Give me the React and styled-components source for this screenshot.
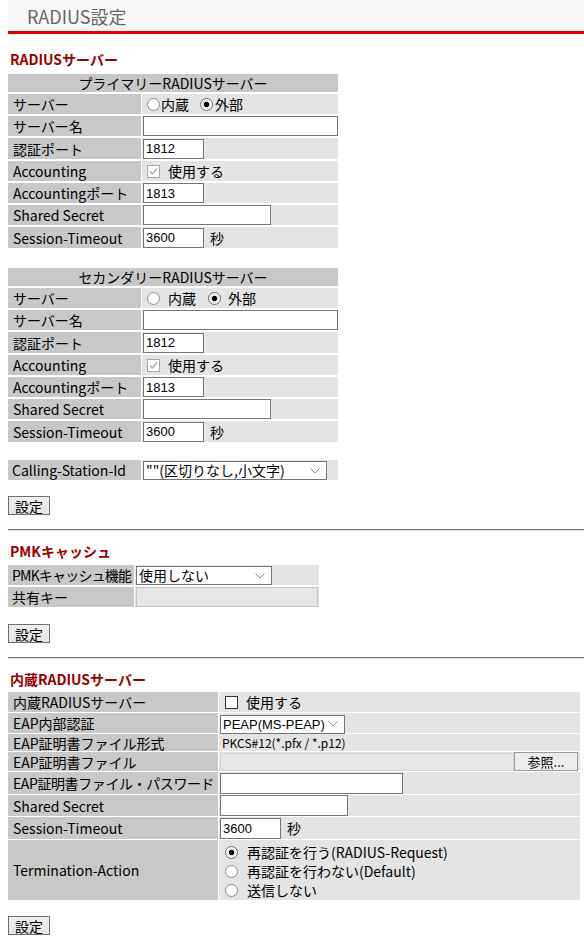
import React from 'react';
import styled, { createGlobalStyle } from 'styled-components';

const Global = createGlobalStyle`
  html, body { padding: 0; background: #fff; }
  body {
    margin: 0 0 0 8px;
    font-family: "Noto Sans CJK JP", "Noto Sans", sans-serif;
    font-size: 14px;
    color: #000;
  }
  * { box-sizing: border-box; }
`;

const PageHeader = styled.header`
  height: 34px;
  background: #f8f8f8;
  border-bottom: 3px solid #e60000;
  padding-left: 19px;
  display: flex;
  align-items: center;
  font-size: 18px;
  color: #666;
  font-weight: normal;
  margin: 0;
`;

const SectionTitle = styled.h2`
  margin: ${p => p.$top}px 0 ${p => p.$bottom}px 2px;
  font-size: 14px;
  line-height: 16px;
  font-weight: bold;
  color: #990000;
`;

const FormGrid = styled.div`
  display: grid;
  grid-template-columns: ${p => p.$label}px ${p => p.$value}px;
  row-gap: ${p => p.$rowGap ?? 2}px;
  column-gap: 1px;
  margin-top: ${p => p.$top || 0}px;
  line-height: 18px;
`;

const HeadCell = styled.div`
  grid-column: 1 / -1;
  background: #c8c8c8;
  text-align: center;
  height: 18px;
  line-height: 18px;
`;

const Label = styled.div`
  background: #c8c8c8;
  padding-left: ${p => p.$pad ?? 5}px;
  display: flex;
  align-items: center;
  height: ${p => p.$h || 20}px;
  white-space: nowrap;
  letter-spacing: ${p => p.$ls || 0}px;
  overflow: hidden;
`;

const Value = styled.div`
  background: #e4e4e4;
  display: flex;
  align-items: center;
  gap: ${p => p.$gap || 0}px;
  padding-left: ${p => p.$pad ?? 1}px;
  padding-right: ${p => p.$padR || 0}px;
  height: ${p => p.$h || 20}px;
  white-space: nowrap;
`;

const TextInput = styled.input`
  width: ${p => p.$w}px;
  height: ${p => p.$h || 20}px;
  border: 1px solid #767676;
  background: ${p => (p.disabled ? '#e6e6e6' : '#fff')};
  border-color: ${p => (p.disabled ? '#c4c4c4' : '#767676')};
  font-family: "Liberation Sans", Arial, sans-serif;
  font-size: 13px;
  padding: 0 2px;
  margin: 0;
  color: #000;
  outline: none;
`;

const Unit = styled.span`
  margin-left: ${p => p.$ml || 6}px;
`;

const Choice = styled.label`
  display: inline-flex;
  align-items: center;
  gap: ${p => p.$gap}px;
  margin-left: ${p => p.$ml || 0}px;
  line-height: 18px;
`;

const RadioDot = styled.span`
  width: 13px;
  height: 13px;
  border-radius: 50%;
  flex: none;
  border: 1px solid ${p => (p.$on ? '#6a6a6a' : '#8c8c8c')};
  background: ${p =>
    p.$on
      ? 'radial-gradient(circle, #000 0 2.4px, #e0e0e0 2.9px 4px, #fff 4.6px)'
      : '#fff'};
`;

const RadioList = styled.div`
  display: flex;
  flex-direction: column;
  gap: 1px;
  padding: 2px 0 0 5px;
`;

const SelectWrap = styled.div`
  position: relative;
  width: ${p => p.$w}px;
  height: 19px;
`;

const Select = styled.select`
  appearance: none;
  width: 100%;
  height: 100%;
  border: 1px solid #767676;
  background: #fff;
  font-family: ${p => (p.$latin ? '"Liberation Sans", Arial, sans-serif' : '"Noto Sans CJK JP", sans-serif')};
  font-size: ${p => (p.$latin ? 13 : 14)}px;
  padding: 0 0 0 2px;
  margin: 0;
  color: #000;
  outline: none;
  line-height: 17px;
`;

const Chevron = styled.svg`
  position: absolute;
  right: 7px;
  top: 7px;
  pointer-events: none;
`;

const Button = styled.button`
  display: block;
  width: ${p => p.$w || 42}px;
  height: 19px;
  margin: ${p => p.$top || 0}px 0 0 ${p => p.$ml || 0}px;
  padding: 0;
  border: 1px solid #707070;
  background: linear-gradient(#f0f0f0, #e3e3e3);
  font-family: "Noto Sans CJK JP", sans-serif;
  font-size: ${p => p.$fs || 14}px;
  line-height: 16px;
  color: #000;
`;

const BrowseButton = styled(Button).attrs({ as: 'span' })`
  display: flex;
  align-items: center;
  justify-content: center;
  flex: none;
  border-color: #9a9a9a;
  background: #ececec;
`;

const Rule = styled.hr`
  margin: ${p => p.$top}px 0 0 0;
  border: 0;
  border-top: 1px solid #7c7c7c;
  border-bottom: 1px solid #d8d8d8;
  height: 0;
`;

const SmallText = styled.span`
  font-size: 12px;
  padding-left: 2px;
`;

const FileField = styled.div`
  flex: 1;
  height: 18px;
  background: #e6e6e6;
  border: 1px solid #d2d2d2;
`;

function Radio({ on }) {
  return <RadioDot $on={on} />;
}

function Check({ on, disabled }) {
  return (
    <svg width="13" height="13" viewBox="0 0 13 13" style={{ flex: 'none' }}>
      <rect x="0.5" y="0.5" width="12" height="12" fill="#fff" stroke={disabled ? '#a8a8a8' : '#333'} />
      {on && <polyline points="3,6.5 5.3,9 10,3.5" fill="none" stroke="#98b0c8" strokeWidth="1.3" />}
    </svg>
  );
}

function Dropdown({ w, value, latin }) {
  return (
    <SelectWrap $w={w}>
      <Select $latin={latin} defaultValue={value}>
        <option>{value}</option>
      </Select>
      <Chevron width="10" height="6" viewBox="0 0 10 6">
        <polyline points="0.5,0.5 5,5 9.5,0.5" fill="none" stroke="#8a8a8a" strokeWidth="1" />
      </Chevron>
    </SelectWrap>
  );
}

function ServerTable({ title, spaced, top }) {
  return (
    <FormGrid $label={133} $value={196} $top={top}>
      <HeadCell>{title}</HeadCell>
      <Label>サーバー</Label>
      <Value $pad={5}>
        <Choice $gap={spaced ? 8 : 1}><Radio />内蔵</Choice>
        <Choice $gap={spaced ? 7 : 2} $ml={spaced ? 12 : 11}><Radio on />外部</Choice>
      </Value>
      <Label>サーバー名</Label>
      <Value><TextInput $w={195} $h={20} /></Value>
      <Label $h={21}>認証ポート</Label>
      <Value $h={21}><TextInput $w={61} defaultValue="1812" /></Value>
      <Label>Accounting</Label>
      <Value $pad={5}>
        <Choice $gap={8}><Check on disabled />使用する</Choice>
      </Value>
      <Label>Accountingポート</Label>
      <Value><TextInput $w={61} defaultValue="1813" /></Value>
      <Label>Shared Secret</Label>
      <Value><TextInput $w={128} /></Value>
      <Label $h={21}>Session-Timeout</Label>
      <Value $h={21}><TextInput $w={61} defaultValue="3600" /><Unit>秒</Unit></Value>
    </FormGrid>
  );
}

export default function App() {
  return (
    <>
      <Global />
      <PageHeader as="h1">RADIUS設定</PageHeader>

      <SectionTitle $top={17} $bottom={7}>RADIUSサーバー</SectionTitle>
      <ServerTable title="プライマリーRADIUSサーバー" />
      <ServerTable title="セカンダリーRADIUSサーバー" spaced top={20} />
      <FormGrid $label={133} $value={196} $top={18}>
        <Label $pad={4}>Calling-Station-Id</Label>
        <Value><Dropdown w={184} value={'""(区切りなし,小文字)'} /></Value>
      </FormGrid>
      <Button $top={16}>設定</Button>

      <Rule $top={14} />
      <SectionTitle $top={12} $bottom={6}>PMKキャッシュ</SectionTitle>
      <FormGrid $label={126} $value={184}>
        <Label $pad={4} $ls={-0.8}>PMKキャッシュ機能</Label>
        <Value><Dropdown w={136} value="使用しない" /></Value>
        <Label $pad={4}>共有キー</Label>
        <Value><TextInput $w={182} disabled /></Value>
      </FormGrid>
      <Button $top={17}>設定</Button>

      <Rule $top={14} />
      <SectionTitle $top={12} $bottom={5}>内蔵RADIUSサーバー</SectionTitle>
      <FormGrid $label={210} $value={361} $rowGap={1}>
        <Label>内蔵RADIUSサーバー</Label>
        <Value $pad={6}>
          <Choice $gap={8}><Check />使用する</Choice>
        </Value>
        <Label>EAP内部認証</Label>
        <Value><Dropdown w={125} value="PEAP(MS-PEAP)" latin /></Value>
        <Label $h={17}>EAP証明書ファイル形式</Label>
        <Value $h={17}><SmallText>PKCS#12(*.pfx / *.p12)</SmallText></Value>
        <Label $h={19}>EAP証明書ファイル</Label>
        <Value $h={19} $padR={2}>
          <FileField />
          <BrowseButton $w={64} $fs={13}>参照...</BrowseButton>
        </Value>
        <Label $h={22} $ls={-0.4}>EAP証明書ファイル・パスワード</Label>
        <Value $h={22}><TextInput $w={183} $h={21} /></Value>
        <Label $h={21}>Shared Secret</Label>
        <Value $h={21}><TextInput $w={128} $h={21} /></Value>
        <Label $h={22}>Session-Timeout</Label>
        <Value $h={22}><TextInput $w={61} $h={21} defaultValue="3600" /><Unit>秒</Unit></Value>
        <Label $h={60}>Termination-Action</Label>
        <Value $h={60}>
          <RadioList>
            <Choice $gap={9}><Radio on />再認証を行う(RADIUS-Request)</Choice>
            <Choice $gap={9}><Radio />再認証を行わない(Default)</Choice>
            <Choice $gap={9}><Radio />送信しない</Choice>
          </RadioList>
        </Value>
      </FormGrid>
      <Button $top={16}>設定</Button>
    </>
  );
}
